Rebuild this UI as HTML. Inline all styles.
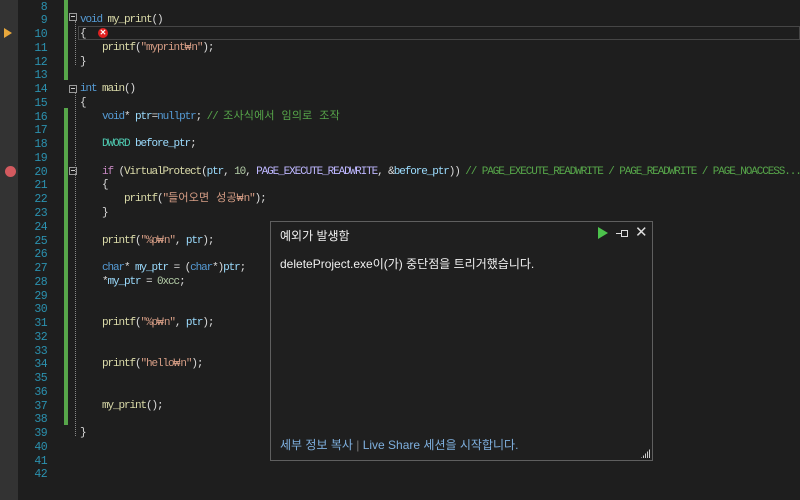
<!DOCTYPE html>
<html><head><meta charset="utf-8"><style>
body{margin:0;width:800px;height:500px;background:#1e1e1e;overflow:hidden;position:relative;font-family:"Liberation Mono","Noto Sans CJK KR",monospace;font-size:11px;letter-spacing:-1.1px;color:#dcdcdc}
.m{position:absolute;left:0;top:0;width:18px;height:500px;background:#333}
.ln{position:absolute;left:18px;width:29px;text-align:right;color:#2b91af;font-size:11.5px;letter-spacing:-0.6px;height:13.76px;line-height:13.76px}
.c{position:absolute;left:80px;white-space:pre;height:13.76px;line-height:13.76px}
.h{letter-spacing:0.2px}
.k{color:#569cd6}.f{color:#dcdcaa}.s{color:#d69d85}.g{color:#57a64a}.t{color:#4ec9b0}.v{color:#9cdcfe}.n{color:#b5cea8}.p{color:#c586c0}.mc{color:#beb7ff}
.gb{position:absolute;left:64px;width:4px;background:#57a64a}
.fold{position:absolute;left:69px;width:8px;height:8px;border:1px solid #999;box-sizing:border-box}
.fold:after{content:"";position:absolute;left:1px;top:2px;width:4px;height:1px;background:#ccc}
.dlg{position:absolute;left:270px;top:221px;width:383px;height:240px;background:#1f1f1f;border:1px solid #5f5f5f;box-sizing:border-box;font-family:"Liberation Sans","Noto Sans CJK KR",sans-serif;font-size:12px;letter-spacing:0;color:#f0f0f0}
</style></head><body>
<div class="m"></div>
<div class="gb" style="top:0;height:80px"></div>
<div class="gb" style="top:108px;height:317px"></div>
<div style="position:absolute;left:78px;top:26px;width:722px;height:14px;border:1px solid #464646;box-sizing:border-box"></div>
<div class="fold" style="top:13px"></div><div class="fold" style="top:85px"></div><div class="fold" style="top:167px"></div>
<div style="position:absolute;left:75px;top:21px;width:1px;height:44px;border-left:1px dotted #888"></div>
<div style="position:absolute;left:75px;top:93px;width:1px;height:343px;border-left:1px dotted #888"></div>
<div style="position:absolute;left:4px;top:28px;width:0;height:0;border-top:5px solid transparent;border-bottom:5px solid transparent;border-left:8px solid #e8a83c"></div>
<div style="position:absolute;left:5px;top:166px;width:11px;height:11px;border-radius:50%;background:#d35a5f"></div>
<div style="position:absolute;left:98px;top:28px;width:10px;height:10px;border-radius:50%;background:#e02020;color:#fff;font:bold 8px/10px 'Liberation Sans';letter-spacing:0;text-align:center">✕</div>
<div id="L"></div>
<div class="dlg">
<div style="position:absolute;left:9px;top:5px">예외가 발생함</div>
<div style="position:absolute;left:327px;top:5px;width:0;height:0;border-top:6px solid transparent;border-bottom:6px solid transparent;border-left:10px solid #4cc24c"></div>
<div style="position:absolute;left:345px;top:11px;width:6px;height:1px;background:#ddd"></div>
<div style="position:absolute;left:350px;top:8px;width:7px;height:7px;border:1px solid #ddd;box-sizing:border-box"></div>
<div style="position:absolute;left:364px;top:1px;font-size:15px;color:#ddd">✕</div>
<div style="position:absolute;left:9px;top:33px">deleteProject.exe이(가) 중단점을 트리거했습니다.</div>
<div style="position:absolute;left:9px;top:214px;color:#7fb0df">세부 정보 복사 <span style="color:#777">|</span> Live Share 세션을 시작합니다.</div>
<div style="position:absolute;right:2px;bottom:2px;width:9px;height:9px;background:repeating-linear-gradient(90deg,#ccc 0 1px,transparent 1px 2px);clip-path:polygon(100% 0,100% 100%,0 100%)"></div>
</div>
<script>
var W="<span class=h>₩</span>";
var L=[
"","<span class=k>void</span> <span class=f>my_print</span>()","{","    <span class=f>printf</span>(<span class=s>\"myprint"+W+"n\"</span>);","}","",
"<span class=k>int</span> <span class=f>main</span>()","{","    <span class=k>void</span>* <span class=v>ptr</span>=<span class=k>nullptr</span>; <span class=g>// <span class=h>조사식에서 임의로 조작</span></span>","",
"    <span class=t>DWORD</span> <span class=v>before_ptr</span>;","",
"    <span class=p>if</span> (<span class=f>VirtualProtect</span>(<span class=v>ptr</span>, <span class=n>10</span>, <span class=mc>PAGE_EXECUTE_READWRITE</span>, &amp;<span class=v>before_ptr</span>)) <span class=g>// PAGE_EXECUTE_READWRITE / PAGE_READWRITE / PAGE_NOACCESS...</span>",
"    {","        <span class=f>printf</span>(<span class=s>\"<span class=h>들어오면 성공₩</span>n\"</span>);","    }","",
"    <span class=f>printf</span>(<span class=s>\"%p"+W+"n\"</span>, <span class=v>ptr</span>);","",
"    <span class=k>char</span>* <span class=v>my_ptr</span> = (<span class=k>char</span>*)<span class=v>ptr</span>;","    *<span class=v>my_ptr</span> = <span class=n>0xcc</span>;","","",
"    <span class=f>printf</span>(<span class=s>\"%p"+W+"n\"</span>, <span class=v>ptr</span>);","","",
"    <span class=f>printf</span>(<span class=s>\"hello"+W+"n\"</span>);","","",
"    <span class=f>my_print</span>();","","}","","",""];
var h="";for(var i=0;i<35;i++){var y=(0.6+i*13.76).toFixed(2);h+='<div class=ln style="top:'+y+'px">'+(i+8)+'</div><div class=c style="top:'+y+'px">'+L[i]+'</div>';}
document.getElementById("L").innerHTML=h;
</script>
</body></html>
